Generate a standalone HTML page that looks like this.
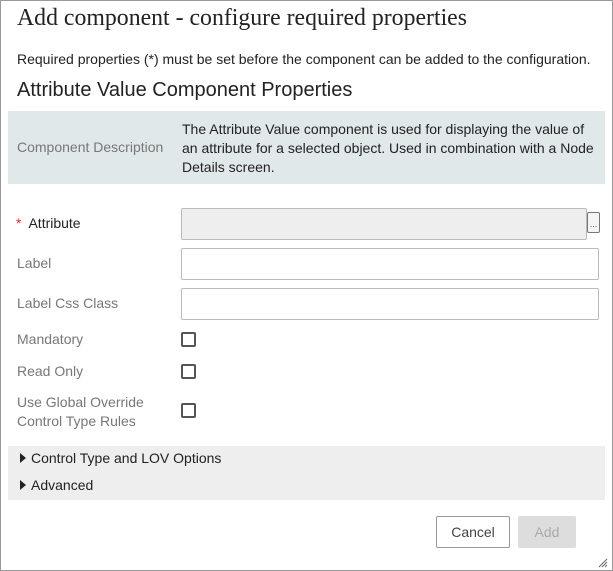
<!DOCTYPE html>
<html><head><style>
*{margin:0;padding:0;box-sizing:border-box}
body{width:613px;height:571px;background:#fff;font-family:"Liberation Sans",sans-serif;position:relative;overflow:hidden}
.frame{position:absolute;left:0;top:0;width:613px;height:571px;border:1px solid #999}
.a{position:absolute;white-space:nowrap}
.lbl{font-size:14px;color:#777}
.inp{position:absolute;left:181px;width:418px;height:32px;border:1px solid #bbb;border-radius:2px;background:#fff}
.cb{position:absolute;left:181px;width:15px;height:15px;border:2px solid #555;border-radius:2px}
</style></head><body>
<div class="frame"></div>
<div class="a" style="left:17px;top:5px;font-family:'Liberation Serif',serif;font-size:23.8px;color:#222">Add component - configure required properties</div>
<div class="a" style="left:17px;top:51px;font-size:14px;color:#222">Required properties (*) must be set before the component can be added to the configuration.</div>
<div class="a" style="left:17px;top:79px;font-size:20px;color:#222">Attribute Value Component Properties</div>
<div class="a" style="left:8px;top:111px;width:597px;height:73px;background:#e1e8ea"></div>
<div class="a lbl" style="left:17px;top:139px">Component Description</div>
<div class="a" style="left:182px;top:120px;font-size:14px;color:#222;line-height:19px">The Attribute Value component is used for displaying the value of<br>an attribute for a selected object. Used in combination with a Node<br>Details screen.</div>
<div class="a" style="left:16px;top:215px;font-size:14px;color:#222"><span style="color:#c33">*</span>&nbsp; Attribute</div>
<div class="inp" style="top:208px;width:406px;height:32px;background:#eee"></div>
<div class="a" style="left:587px;top:212px;width:13px;height:21px;border:1px solid #777;border-radius:2px;background:#f4f4f4;font-size:9px;line-height:22px;text-align:center;color:#555">...</div>
<div class="a lbl" style="left:17px;top:255px">Label</div>
<div class="inp" style="top:248px"></div>
<div class="a lbl" style="left:17px;top:295px">Label Css Class</div>
<div class="inp" style="top:288px"></div>
<div class="a lbl" style="left:17px;top:331px">Mandatory</div>
<div class="cb" style="top:332px"></div>
<div class="a lbl" style="left:17px;top:363px">Read Only</div>
<div class="cb" style="top:364px"></div>
<div class="a lbl" style="left:17px;top:393px;line-height:19px">Use Global Override<br>Control Type Rules</div>
<div class="cb" style="top:403px"></div>
<div class="a" style="left:8px;top:446px;width:597px;height:54px;background:#eee"></div>
<svg class="a" style="left:20px;top:453px" width="6" height="10"><path d="M0 0L6 5L0 10Z" fill="#222"/></svg>
<div class="a" style="left:31px;top:450px;font-size:14px;color:#222">Control Type and LOV Options</div>
<svg class="a" style="left:20px;top:480px" width="6" height="10"><path d="M0 0L6 5L0 10Z" fill="#222"/></svg>
<div class="a" style="left:31px;top:477px;font-size:14px;color:#222">Advanced</div>
<div class="a" style="left:436px;top:516px;width:74px;height:32px;border:1px solid #999;border-radius:2px;font-size:14px;color:#444;text-align:center;line-height:30px">Cancel</div>
<div class="a" style="left:518px;top:516px;width:58px;height:32px;background:#ddd;border-radius:2px;font-size:14px;color:#aaa;text-align:center;line-height:32px">Add</div>
<svg class="a" style="left:596px;top:556px" width="12" height="12"><path d="M3 11L11 3M6 11L11 6M9 11L11 9" stroke="#666" stroke-width="1"/></svg>
</body></html>
